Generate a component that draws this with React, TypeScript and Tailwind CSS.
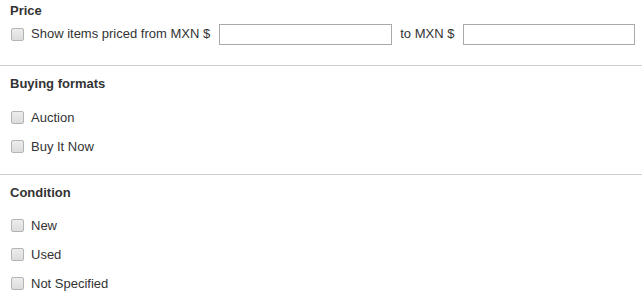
const Box = () => (
  <span className="inline-block w-[13px] h-[13px] shrink-0 rounded-[2px] border border-[#b4b4b4] bg-gradient-to-b from-[#ededed] to-[#dcdcdc]" />
);

const Option = ({ label }: { label: string }) => (
  <label className="flex h-[29px] items-center gap-[7px] pl-[11px]">
    <Box />
    <span>{label}</span>
  </label>
);

export default function App() {
  return (
    <div
      className="w-[642px] h-[308px] bg-white text-[13px] text-[#333] overflow-hidden"
      style={{ fontFamily: '"Liberation Sans", Arial, sans-serif' }}
    >
      <section className="pt-[2px] pb-[21px] border-b border-[#cfcfcf]">
        <h3 className="h-[18px] leading-[18px] pl-[10px] font-bold">Price</h3>
        <div className="mt-[4px] flex h-[20px] items-center pl-[11px]">
          <Box />
          <span className="ml-[7px]">Show items priced from MXN $</span>
          <input className="ml-[9px] w-[173px] h-[21px] border border-[#a9a9a9] outline-none" />
          <span className="ml-[8px]">to MXN $</span>
          <input className="ml-[9px] w-[172px] h-[21px] border border-[#a9a9a9] outline-none" />
        </div>
      </section>
      <section className="pt-[9px] pb-[13px] border-b border-[#cfcfcf]">
        <h3 className="h-[18px] leading-[18px] pl-[10px] font-bold">Buying formats</h3>
        <div className="mt-[10px]">
          <Option label="Auction" />
          <Option label="Buy It Now" />
        </div>
      </section>
      <section className="pt-[9px]">
        <h3 className="h-[18px] leading-[18px] pl-[10px] font-bold">Condition</h3>
        <div className="mt-[9px]">
          <Option label="New" />
          <Option label="Used" />
          <Option label="Not Specified" />
        </div>
      </section>
    </div>
  );
}
